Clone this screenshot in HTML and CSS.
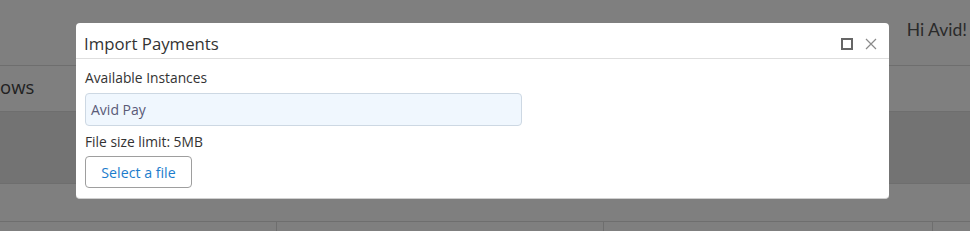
FILE: index.html
```html
<!DOCTYPE html>
<html>
<head>
<meta charset="utf-8">
<link rel="stylesheet" href="styles.css">
</head>
<body>
<div class="page">
  <header class="topbar">
    <span class="greeting">Hi Avid!</span>
  </header>
  <div class="titlebar"><span class="pagetitle">ows</span></div>
  <div class="band"></div>
  <div class="row"></div>
  <div class="cols">
    <div class="col c1"></div>
    <div class="col c2"></div>
    <div class="col c3"></div>
    <div class="col c4"></div>
  </div>
</div>
<div class="overlay"></div>
<div class="modal">
  <div class="modal-head">
    <span class="modal-title">Import Payments</span>
    <div class="modal-tools">
      <span class="tool-max"></span>
      <svg class="tool-close" width="12" height="12" viewBox="0 0 12 12"><path d="M1 1L11 11M11 1L1 11" stroke="#8a8a8a" stroke-width="1.2" fill="none"/></svg>
    </div>
  </div>
  <div class="modal-body">
    <div class="label first">Available Instances</div>
    <div class="select">Avid Pay</div>
    <div class="label limit">File size limit: 5MB</div>
    <button class="btn">Select a file</button>
  </div>
</div>
</body>
</html>
```
FILE: styles.css
```css
html, body { margin: 0; padding: 0; }
body { width: 970px; height: 231px; overflow: hidden; background: #fff; font-family: "Lato", "Open Sans", sans-serif; position: relative; }
.page { display: flex; flex-direction: column; }
.topbar { border-bottom: 1px solid #dcdcdc; display: flex; justify-content: flex-end; box-sizing: border-box; height: 66px; }
.greeting { font-size: 17.5px; color: #555; margin-top: 19px; margin-right: 3px; }
.titlebar { height: 46px; border-bottom: 1px solid #dcdcdc; box-sizing: border-box; display: flex; align-items: center; }
.pagetitle { font-size: 18.5px; color: #444; font-family: "Open Sans", sans-serif; margin-top: -5px; }
.band { height: 72px; background: #e6e6e6; border-bottom: 1px solid #dcdcdc; box-sizing: border-box; }
.row { height: 38px; border-bottom: 1px solid #dcdcdc; box-sizing: border-box; }
.cols { display: flex; height: 20px; }
.col { border-right: 1px solid #dcdcdc; box-sizing: border-box; }
.c1 { width: 277px; }
.c2 { width: 327px; }
.c3 { width: 329px; }
.c4 { flex: 1; border-right: none; }
.overlay { position: absolute; inset: 0; background: rgba(0,0,0,0.5); }
.modal { position: absolute; left: 76px; top: 23px; width: 813px; height: 176px; background: #fff; border-radius: 4px; border-bottom: 1px solid #cfcfcf; box-sizing: border-box; font-family: "Open Sans", sans-serif; }
.modal-head { height: 36px; border-bottom: 1px solid #dedede; box-sizing: border-box; display: flex; align-items: center; justify-content: space-between; padding: 0 12px 0 8px; }
.modal-title { font-size: 16.8px; color: #333; margin-top: 6px; }
.modal-tools { display: flex; align-items: center; gap: 12px; margin-top: 6px; }
.tool-max { width: 12px; height: 12px; border: 2.5px solid #666; box-sizing: border-box; display: block; margin-left: -1px; }
.tool-close { display: block; }
.modal-body { padding: 8px 9px; display: flex; flex-direction: column; align-items: flex-start; }
.label { font-size: 13.8px; color: #333; line-height: 18px; }
.first { margin-top: 2px; }
.select { margin-top: 6px; width: 437px; height: 33px; box-sizing: border-box; background: #f0f7fe; border: 1px solid #cdd8e3; border-radius: 4px; font-size: 14px; color: #5a5a78; padding: 0 5px; line-height: 31px; }
.limit { margin-top: 7px; }
.btn { margin-top: 5px; width: 107px; height: 32px; border: 1px solid #9e9e9e; border-radius: 4px; background: #fff; font-family: "Open Sans", sans-serif; font-size: 14.2px; color: #1b7ccc; padding: 0; }
```
